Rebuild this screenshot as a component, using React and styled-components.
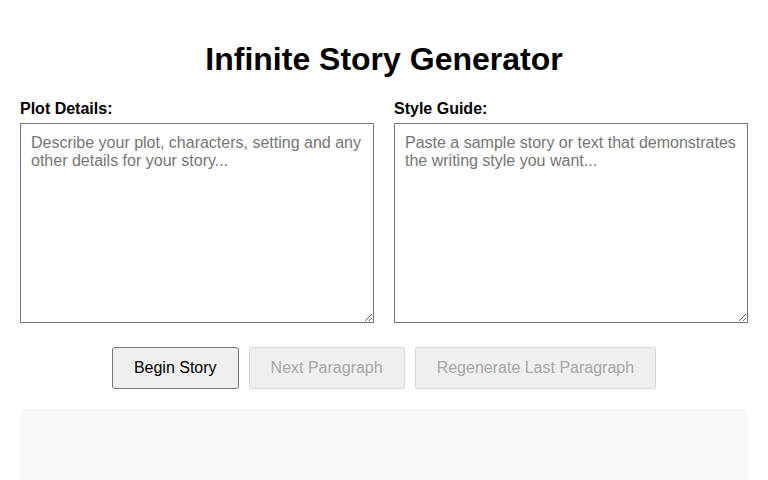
import React, { useState } from "react";
import styled, { createGlobalStyle } from "styled-components";

const GlobalStyle = createGlobalStyle`
  body {
    margin: 0;
    background: #fff;
    font-family: "Liberation Sans", Arial, sans-serif;
  }
`;

const Page = styled.div`
  padding: 0 20px 20px;
`;

const Title = styled.h1`
  margin: 41px 0 22px;
  font-size: 32px;
  line-height: 37px;
  font-weight: bold;
  text-align: center;
  color: #000;
`;

const Columns = styled.div`
  display: grid;
  grid-template-columns: 1fr 1fr;
  gap: 20px;
`;

const Field = styled.div`
  display: flex;
  flex-direction: column;
`;

const Label = styled.label`
  font-size: 16px;
  line-height: 18px;
  font-weight: bold;
  margin-bottom: 5px;
`;

const TextArea = styled.textarea`
  display: block;
  box-sizing: border-box;
  width: 100%;
  height: 200px;
  padding: 10px;
  border: 1px solid #767676;
  border-radius: 0;
  font-family: "Liberation Sans", Arial, sans-serif;
  font-size: 16px;
  line-height: 18px;
  resize: vertical;
  &::placeholder {
    color: #757575;
  }
`;

const Toolbar = styled.div`
  display: flex;
  justify-content: center;
  gap: 10px;
  margin-top: 24px;
`;

const Button = styled.button`
  box-sizing: border-box;
  height: 42px;
  padding: 0 21px;
  font-family: "Liberation Sans", Arial, sans-serif;
  font-size: 16px;
  background: #efefef;
  color: ${p => (p.disabled ? "#a8a8a8" : "#000")};
  border: 1px solid ${p => (p.disabled ? "#d4d4d4" : "#767676")};
  border-radius: 3px;
  cursor: ${p => (p.disabled ? "default" : "pointer")};
`;

const Output = styled.div`
  margin-top: 20px;
  min-height: 100px;
  background: #f8f8f8;
  border-radius: 5px;
`;

export default function App() {
  const [plot, setPlot] = useState("");
  const [style, setStyle] = useState("");

  return (
    <Page>
      <GlobalStyle />
      <Title>Infinite Story Generator</Title>
      <Columns>
        <Field>
          <Label htmlFor="plot">Plot Details:</Label>
          <TextArea
            id="plot"
            value={plot}
            onChange={e => setPlot(e.target.value)}
            placeholder="Describe your plot, characters, setting and any other details for your story..."
          />
        </Field>
        <Field>
          <Label htmlFor="style">Style Guide:</Label>
          <TextArea
            id="style"
            value={style}
            onChange={e => setStyle(e.target.value)}
            placeholder="Paste a sample story or text that demonstrates the writing style you want..."
          />
        </Field>
      </Columns>
      <Toolbar>
        <Button>Begin Story</Button>
        <Button disabled>Next Paragraph</Button>
        <Button disabled>Regenerate Last Paragraph</Button>
      </Toolbar>
      <Output />
    </Page>
  );
}
